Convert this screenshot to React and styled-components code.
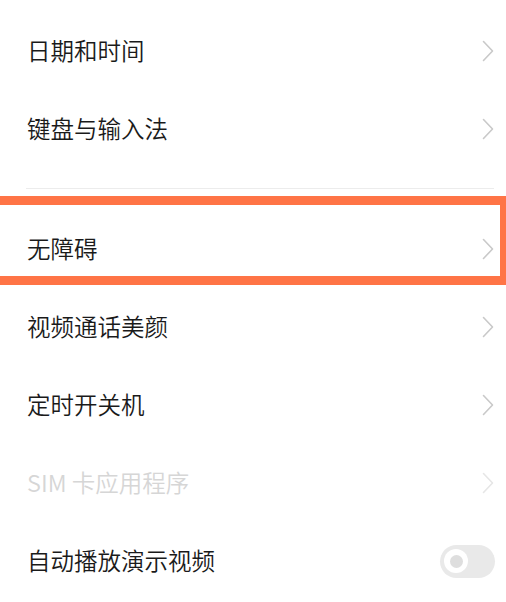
import React from "react";
import styled, { createGlobalStyle } from "styled-components";

const Global = createGlobalStyle`
  html, body { margin: 0; padding: 0; background: #ffffff; }
  body { overflow: hidden; font-family: "Noto Sans CJK SC", "Noto Sans", sans-serif; }
`;

const Page = styled.div`
  width: 506px;
  height: 602px;
  overflow: hidden;
  background: #ffffff;
  padding-top: 12px;
  box-sizing: border-box;
`;

const Row = styled.div`
  position: relative;
  height: 78px;
  display: flex;
  align-items: center;
  justify-content: space-between;
  padding: 0 11px 0 27px;
  box-sizing: border-box;
`;

const Label = styled.span`
  font-size: 23.5px;
  font-weight: 350;
  line-height: 1;
  color: ${(p) => (p.$disabled ? "#d6d6d6" : "#1a1a1a")};
  letter-spacing: 0;
`;

const Divider = styled.div`
  height: 1px;
  background: #ececec;
  margin: 20px 12px 21px 26px;
`;

const Highlight = styled.div`
  position: absolute;
  left: -10px;
  right: -3px;
  top: -14px;
  bottom: 3px;
  border: 9.5px solid #ff7446;
  pointer-events: none;
`;

const Track = styled.div`
  width: 55px;
  height: 33px;
  border-radius: 17px;
  background: #e9e9e9;
  display: flex;
  align-items: center;
  padding-left: 4px;
  box-sizing: border-box;
`;

const Knob = styled.div`
  width: 24px;
  height: 24px;
  border-radius: 50%;
  background: #ffffff;
  display: flex;
  align-items: center;
  justify-content: center;
  &::after {
    content: "";
    width: 13px;
    height: 13px;
    border-radius: 50%;
    background: #dedede;
  }
`;

const Chevron = ({ light }) => (
  <svg width="14" height="22" viewBox="0 0 14 22">
    <path
      d="M2.5 1.5 L11.5 11 L2.5 20.5"
      fill="none"
      stroke={light ? "#e6e6e6" : "#c9c9c9"}
      strokeWidth="1.6"
      strokeLinecap="round"
      strokeLinejoin="round"
    />
  </svg>
);

const Item = ({ label, disabled, toggle, highlight }) => (
  <Row>
    <Label $disabled={disabled}>{label}</Label>
    {toggle ? (
      <Track>
        <Knob />
      </Track>
    ) : (
      <Chevron light={disabled} />
    )}
    {highlight && <Highlight />}
  </Row>
);

export default function App() {
  return (
    <>
      <Global />
      <Page>
        <Item label="日期和时间" />
        <Item label="键盘与输入法" />
        <Divider />
        <Item label="无障碍" highlight />
        <Item label="视频通话美颜" />
        <Item label="定时开关机" />
        <Item label="SIM 卡应用程序" disabled />
        <Item label="自动播放演示视频" toggle />
      </Page>
    </>
  );
}
